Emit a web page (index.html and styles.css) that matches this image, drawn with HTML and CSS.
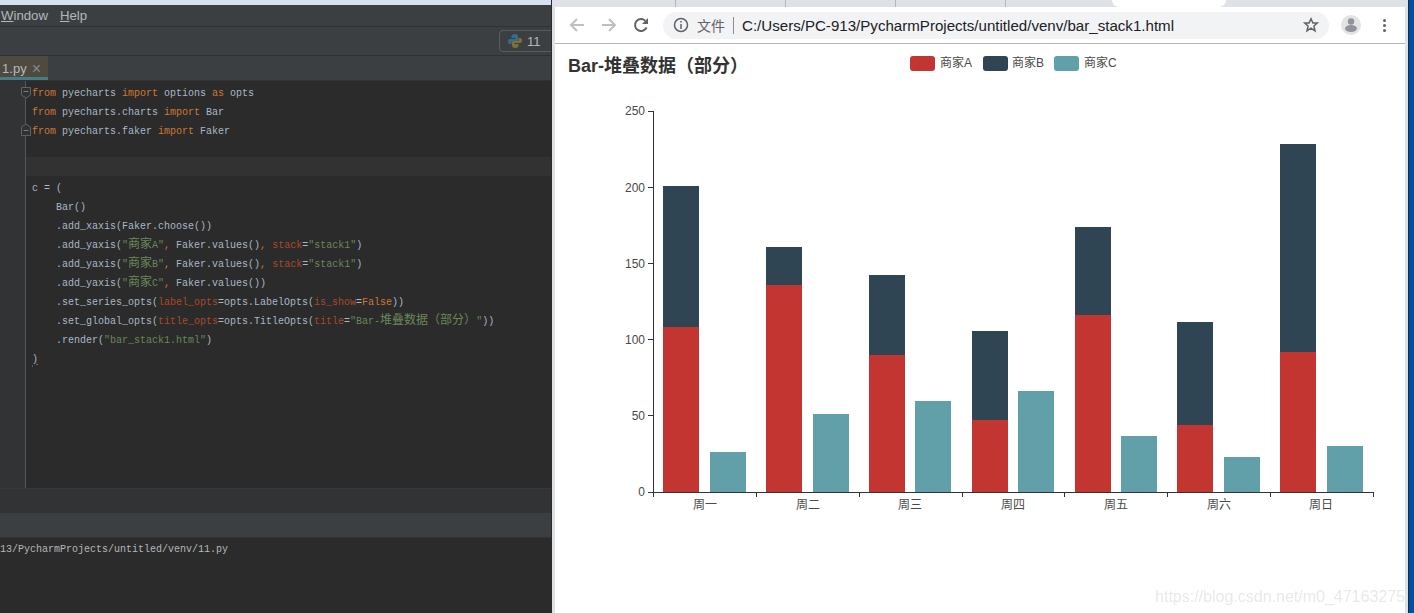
FILE: index.html
```html
<!DOCTYPE html>
<html lang="zh">

<head>
    <meta charset="UTF-8">
    <title>bar_stack1</title>
    <link rel="stylesheet" href="styles.css">
</head>

<body>
    <div class="ide">
        <div class="title-strip"></div>
        <div class="menu-bar">
            <span class="menu-item"><u>W</u>indow</span>
            <span class="menu-item"><u>H</u>elp</span>
        </div>
        <div class="tool-bar">
            <div class="run-config">
                <svg class="py-icon" width="16" height="16" viewBox="0 0 16 16">
                    <path fill="#3a6a8c" d="M8 1C5 1 4.500 2 4.500 3.500V5H8.500V6H3C1.500 6 1 7 1 8.500S1.500 11 3 11H4.500V9.500C4.500 8.500 5 8 6 8H9.500C10.500 8 11 7.500 11 6.500V3.500C11 2 10 1 8 1Z"/>
                    <path fill="#7d7030" d="M8 15C11 15 11.500 14 11.500 12.500V11H7.500V10H13C14.500 10 15 9 15 7.500S14.500 5 13 5H11.500V6.500C11.500 7.500 11 8 10 8H6.500C5.500 8 5 8.500 5 9.500V12.500C5 14 6 15 8 15Z"/>
                </svg>
                <span>11</span>
            </div>
        </div>
        <div class="tab-bar">
            <div class="file-tab">
                <span class="file-name">1.py</span>
                <span class="tab-close">×</span>
            </div>
        </div>
        <div class="editor">
            <div class="gutter">
                <svg class="fold-marks" width="12" height="50" viewBox="0 0 12 50">
                    <path fill="#2f3133" stroke="#5f6264" d="M1.500 .5H10.500V8L6 11L1.500 8Z"/>
                    <path stroke="#7a7d7f" d="M3.500 4.500H8.500"/>
                    <path fill="#2f3133" stroke="#5f6264" d="M6 37L10.500 40V48.500H1.500V40Z"/>
                    <path stroke="#7a7d7f" d="M3.500 43.500H8.500"/>
                </svg>
            </div>
            <div class="code">
                <div class="line"><b>from</b> pyecharts <b>import</b> options <b>as</b> opts</div>
                <div class="line"><b>from</b> pyecharts.charts <b>import</b> Bar</div>
                <div class="line"><b>from</b> pyecharts.faker <b>import</b> Faker</div>
                <div class="line"></div>
                <div class="line current"></div>
                <div class="line">c = (</div>
                <div class="line">    Bar()</div>
                <div class="line">    .add_xaxis(Faker.choose())</div>
                <div class="line">    .add_yaxis(<s>"<span class="cjk">商家</span>A"</s><b>,</b> Faker.values()<b>,</b> <i>stack</i>=<s>"stack1"</s>)</div>
                <div class="line">    .add_yaxis(<s>"<span class="cjk">商家</span>B"</s><b>,</b> Faker.values()<b>,</b> <i>stack</i>=<s>"stack1"</s>)</div>
                <div class="line">    .add_yaxis(<s>"<span class="cjk">商家</span>C"</s><b>,</b> Faker.values())</div>
                <div class="line">    .set_series_opts(<i>label_opts</i>=opts.LabelOpts(<i>is_show</i>=<b>False</b>))</div>
                <div class="line">    .set_global_opts(<i>title_opts</i>=opts.TitleOpts(<i>title</i>=<s>"Bar-<span class="cjk">堆叠数据（部分）</span>"</s>))</div>
                <div class="line">    .render(<s>"bar_stack1.html"</s>)</div>
                <div class="line"><span class="squiggle">)</span></div>
            </div>
        </div>
        <div class="run-head"></div>
        <div class="run-tabs"></div>
        <div class="console">13/PycharmProjects/untitled/venv/11.py</div>
    </div>

    <div class="browser">
        <div class="tab-strip">
            <span class="strip-tab"></span>
            <span class="strip-tab"></span>
            <span class="strip-tab"></span>
            <span class="strip-tab"></span>
            <span class="strip-tab last"></span>
            <span class="strip-tab active"></span>
        </div>
        <div class="nav-bar">
            <svg class="nav-icon" width="16" height="16" viewBox="0 0 16 16" fill="none" stroke="#bcbfc3" stroke-width="2">
                <path d="M15 8H2M8 2L2 8L8 14"/>
            </svg>
            <svg class="nav-icon" width="16" height="16" viewBox="0 0 16 16" fill="none" stroke="#bcbfc3" stroke-width="2">
                <path d="M1 8H14M8 2L14 8L8 14"/>
            </svg>
            <svg class="nav-icon" width="16" height="16" viewBox="0 0 16 16" fill="none" stroke="#5f6368" stroke-width="2">
                <path d="M13.500 10.500A6 6 0 1 1 12.200 3.700"/>
                <path fill="#5f6368" stroke="none" d="M15 1V7H9Z"/>
            </svg>
            <div class="address">
                <svg width="16" height="16" viewBox="0 0 16 16" fill="none" stroke="#5f6368" stroke-width="1.500">
                    <circle cx="8" cy="8" r="6.500"/>
                    <path d="M8 7V12M8 4V5.500"/>
                </svg>
                <span class="not-secure">文件</span>
                <span class="sep"></span>
                <span class="url">C:/Users/PC-913/PycharmProjects/untitled/venv/bar_stack1.html</span>
                <svg class="star" width="16" height="16" viewBox="0 0 16 16" fill="none" stroke="#5f6368" stroke-width="1.500">
                    <path d="M8 1.800L9.900 6H14.400L10.900 9L12 13.800L8 11.200L4 13.800L5.100 9L1.600 6H6.100Z"/>
                </svg>
            </div>
            <div class="avatar">
                <svg width="20" height="20" viewBox="0 0 20 20">
                    <circle cx="10" cy="10" r="10" fill="#e2e3e5"/>
                    <circle cx="10" cy="6.500" r="3.200" fill="#909399"/>
                    <ellipse cx="10" cy="13.500" rx="6" ry="3.500" fill="#909399"/>
                </svg>
            </div>
            <div class="dots"><i></i><i></i><i></i></div>
        </div>

        <div class="page">
            <svg class="chart" width="850" height="569" viewBox="555 44 850 569">
                <text class="chart-title" x="568" y="72">Bar-堆叠数据（部分）</text>

                <rect class="red" x="910" y="56" width="25" height="15" rx="3"/>
                <text class="legend" x="940" y="67">商家A</text>
                <rect class="navy" x="983" y="56" width="25" height="15" rx="3"/>
                <text class="legend" x="1012" y="67">商家B</text>
                <rect class="teal" x="1054" y="56" width="25" height="15" rx="3"/>
                <text class="legend" x="1084" y="67">商家C</text>

                <rect class="navy" x="663" y="186" width="36" height="141"/>
                <rect class="red" x="663" y="327" width="36" height="165"/>
                <rect class="teal" x="710" y="452" width="36" height="40"/>

                <rect class="navy" x="766" y="247" width="36" height="38"/>
                <rect class="red" x="766" y="285" width="36" height="207"/>
                <rect class="teal" x="813" y="414" width="36" height="78"/>

                <rect class="navy" x="869" y="275" width="36" height="80"/>
                <rect class="red" x="869" y="355" width="36" height="137"/>
                <rect class="teal" x="915" y="401" width="36" height="91"/>

                <rect class="navy" x="972" y="331" width="36" height="89"/>
                <rect class="red" x="972" y="420" width="36" height="72"/>
                <rect class="teal" x="1018" y="391" width="36" height="101"/>

                <rect class="navy" x="1075" y="227" width="36" height="88"/>
                <rect class="red" x="1075" y="315" width="36" height="177"/>
                <rect class="teal" x="1121" y="436" width="36" height="56"/>

                <rect class="navy" x="1177" y="322" width="36" height="103"/>
                <rect class="red" x="1177" y="425" width="36" height="67"/>
                <rect class="teal" x="1224" y="457" width="36" height="35"/>

                <rect class="navy" x="1280" y="144" width="36" height="208"/>
                <rect class="red" x="1280" y="352" width="36" height="140"/>
                <rect class="teal" x="1327" y="446" width="36" height="46"/>

                <path class="axis" d="M653.500 111V492.500H1373.500M648 111.500H653M648 187.500H653M648 263.500H653M648 339.500H653M648 415.500H653M648 492.500H653"/>
                <path class="axis" d="M653.500 492V497M756.500 492V497M859.500 492V497M962.500 492V497M1064.500 492V497M1167.500 492V497M1270.500 492V497M1373.500 492V497"/>

                <text class="y-label" x="645" y="115">250</text>
                <text class="y-label" x="645" y="192">200</text>
                <text class="y-label" x="645" y="268">150</text>
                <text class="y-label" x="645" y="344">100</text>
                <text class="y-label" x="645" y="420">50</text>
                <text class="y-label" x="645" y="496">0</text>

                <text class="x-label" x="705" y="509">周一</text>
                <text class="x-label" x="808" y="509">周二</text>
                <text class="x-label" x="910" y="509">周三</text>
                <text class="x-label" x="1013" y="509">周四</text>
                <text class="x-label" x="1116" y="509">周五</text>
                <text class="x-label" x="1219" y="509">周六</text>
                <text class="x-label" x="1321" y="509">周日</text>
            </svg>
            <div class="watermark">https://blog.csdn.net/m0_47163275</div>
        </div>
    </div>
    <div class="desktop-edge"></div>
</body>

</html>
```

FILE: styles.css
```css
body {
    margin: 0;
    width: 1414px;
    height: 613px;
    display: flex;
    overflow: hidden;
    background-color: #dfe1e5;
    font-family: "Liberation Sans", "Noto Sans CJK SC", sans-serif;
}

/* left side: pycharm */
.ide {
    width: 551px;
    height: 613px;
    flex-shrink: 0;
    display: flex;
    flex-direction: column;
    overflow: hidden;
    background-color: #3c3f41;
    color: #a9b7c6;
}

.title-strip {
    height: 5px;
    background-color: #d5e3f1;
}

.menu-bar {
    height: 21px;
    display: flex;
    align-items: center;
    gap: 12px;
    padding-left: 1px;
    border-bottom: 1px solid #2f3133;
    font-size: 13.2px;
    color: #b4b8ba;
}

.tool-bar {
    height: 28px;
    display: flex;
    justify-content: flex-end;
    align-items: center;
    border-bottom: 1px solid #2f3133;
}

.run-config {
    width: 52px;
    height: 20px;
    display: flex;
    align-items: center;
    gap: 4px;
    padding-left: 7px;
    flex-shrink: 0;
    margin-right: -9px;
    border: 1px solid #595c5e;
    border-radius: 4px;
    font-size: 13px;
    color: #b4b8ba;
}

.tab-bar {
    height: 24px;
    display: flex;
    border-bottom: 1px solid #323232;
}

.file-tab {
    width: 41px;
    height: 17px;
    display: flex;
    justify-content: flex-end;
    align-items: center;
    gap: 5px;
    padding: 4px 7px 0 0;
    background-color: #4e4a40;
    border-bottom: 3px solid #4a7a85;
    font-size: 13px;
    color: #b4b8ba;
}

.file-name {
    flex-shrink: 0;
}

.tab-close {
    color: #85898b;
    font-size: 16px;
    line-height: 16px;
}

.editor {
    height: 407px;
    display: flex;
    background-color: #2b2b2b;
}

.gutter {
    width: 25px;
    flex-shrink: 0;
    position: relative;
    background-color: #313335;
    border-right: 1px solid #555759;
}

.fold-marks {
    position: absolute;
    top: 6px;
    left: 20px;
    z-index: 1;
    overflow: visible;
}

.code {
    flex: 1;
    font-family: "Liberation Mono", "Noto Sans CJK SC", monospace;
    font-size: 10px;
}

.line {
    height: 19px;
    line-height: 25px;
    padding-left: 6px;
    white-space: pre;
}

.line.current {
    background-color: #323232;
}

.line b {
    font-weight: normal;
    color: #cc7832;
}

.line i {
    font-style: normal;
    color: #aa4926;
}

.line s {
    text-decoration: none;
    color: #6a8759;
}

.cjk {
    font-family: "Noto Sans CJK SC", sans-serif;
    font-size: 12px;
    line-height: 0;
}

.squiggle {
    text-decoration: underline wavy #6a8759 1px;
}

.run-head {
    height: 25px;
    background-color: #313335;
    border-top: 1px solid #363839;
    box-sizing: border-box;
}

.run-tabs {
    height: 24px;
    background-color: #3c3f41;
}

.console {
    flex: 1;
    padding-top: 6px;
    background-color: #2b2b2b;
    border-top: 1px solid #323232;
    font-family: "Liberation Mono", monospace;
    font-size: 10px;
    line-height: 12px;
    color: #b5b7b9;
}

/* right side: chrome */
.browser {
    width: 850px;
    height: 613px;
    margin-left: 1px;
    flex-shrink: 0;
    border-left: 3px solid #dfe1e5;
    border-right: 3px solid #dfe1e5;
    box-shadow: -1px 0 0 #2b2b2b;
    background-color: white;
    display: flex;
    flex-direction: column;
}

.tab-strip {
    height: 7px;
    display: flex;
    background-color: #dee1e6;
    padding-left: 11px;
}

.strip-tab {
    width: 109px;
    border-right: 1px solid #b4b7bb;
    flex-shrink: 0;
}

.strip-tab.last {
    width: 106px;
    border-right: none;
}

.strip-tab.active {
    width: 114px;
    background-color: white;
    border-right: none;
    border-radius: 0 0 8px 8px;
}

.nav-bar {
    height: 36px;
    display: flex;
    align-items: center;
    padding-left: 14px;
    border-bottom: 1px solid #b6b6b6;
}

.nav-icon {
    margin-right: 16px;
    flex-shrink: 0;
}

.nav-icon:nth-child(3) {
    margin-right: 14px;
}

.address {
    width: 666px;
    height: 27px;
    display: flex;
    align-items: center;
    box-sizing: border-box;
    padding-left: 10px;
    border-radius: 14px;
    background-color: #f1f3f4;
    flex-shrink: 0;
}

.not-secure {
    margin-left: 8px;
    font-size: 14px;
    color: #5f6368;
}

.sep {
    width: 1px;
    height: 17px;
    margin: 0 8px;
    background-color: #8a8d91;
}

.url {
    font-size: 15.1px;
    color: #202124;
    white-space: nowrap;
}

.star {
    margin-left: auto;
    margin-right: 10px;
}

.avatar {
    margin-left: 12px;
    height: 20px;
}

.dots {
    display: flex;
    flex-direction: column;
    gap: 2px;
    margin-left: 22px;
}

.dots i {
    width: 3px;
    height: 3px;
    border-radius: 50%;
    background-color: #5f6368;
}

.page {
    position: relative;
    flex: 1;
    background-color: white;
}

.chart {
    display: block;
}

.chart-title {
    font-family: "Liberation Sans", "Noto Sans CJK SC", sans-serif;
    font-size: 18px;
    font-weight: bold;
    fill: #333;
}

.legend {
    font-size: 12px;
    fill: #4a4a4a;
}

.red {
    fill: #c23531;
}

.navy {
    fill: #2f4554;
}

.teal {
    fill: #61a0a8;
}

.axis {
    fill: none;
    stroke: #333;
    stroke-width: 1;
}

.y-label {
    font-size: 12px;
    fill: #4a4a4a;
    text-anchor: end;
}

.x-label {
    font-size: 12px;
    fill: #4a4a4a;
    text-anchor: middle;
}

.watermark {
    position: absolute;
    right: 0;
    bottom: 7px;
    font-size: 16px;
    color: rgba(120, 120, 120, 0.18);
    white-space: nowrap;
}

.desktop-edge {
    width: 6px;
    flex-shrink: 0;
    background-color: #0050a8;
    border-left: 1px solid #1a2a40;
    box-sizing: border-box;
}
```
